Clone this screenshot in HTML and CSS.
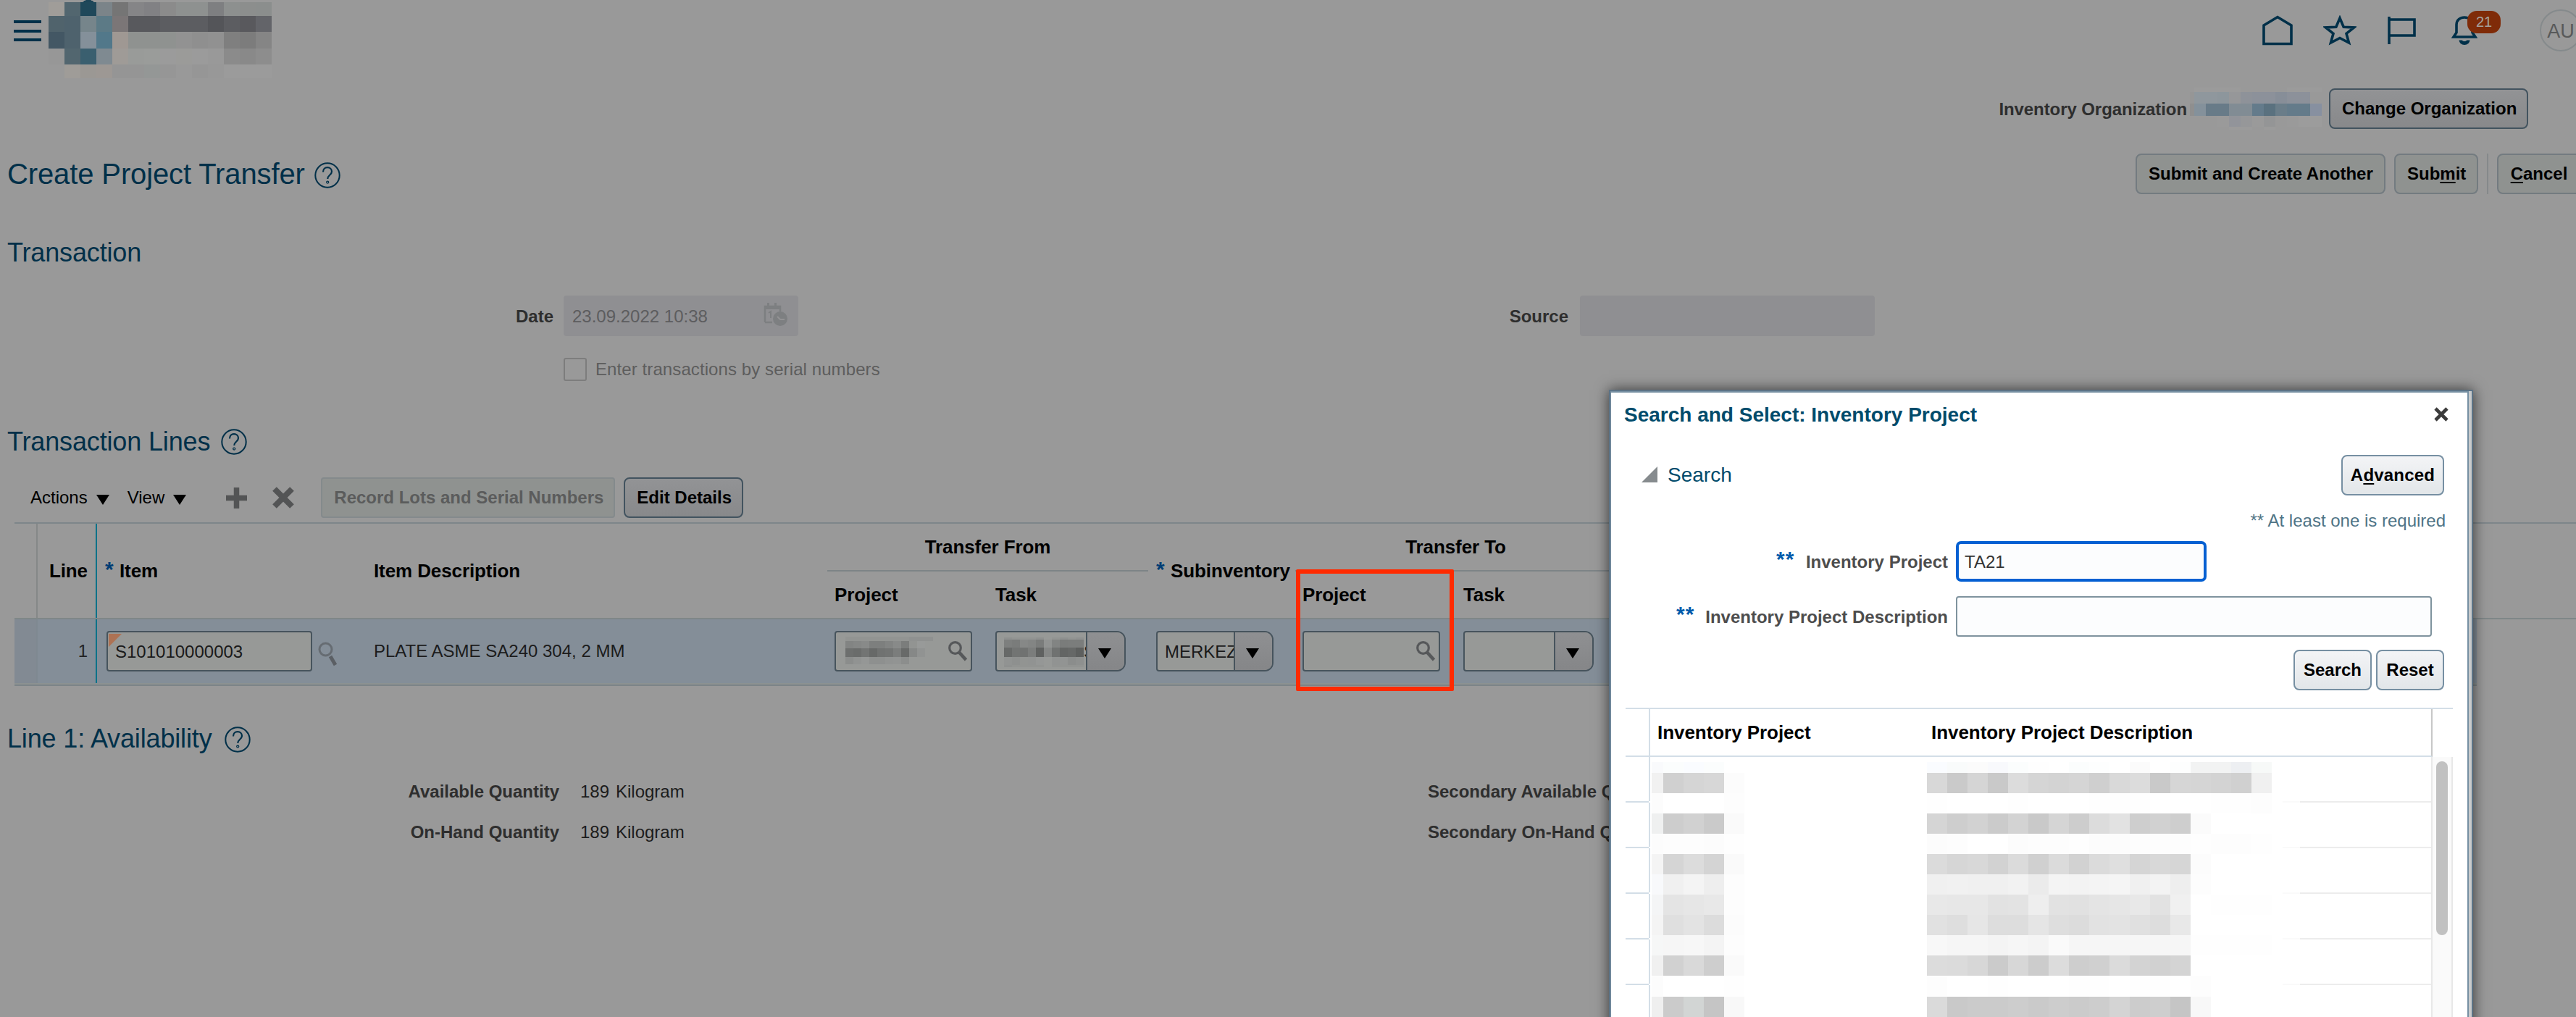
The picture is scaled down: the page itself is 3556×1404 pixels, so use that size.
FILE: index.html
```html
<!DOCTYPE html>
<html lang="en">
<head>
<meta charset="utf-8">
<title>Create Project Transfer</title>
<link rel="stylesheet" href="styles.css">
</head>
<body>
<svg width="0" height="0" class="defs">
  <symbol id="help" viewBox="0 0 36 36"><circle cx="18" cy="18" r="16.7" fill="none" stroke="currentColor" stroke-width="2"/><path d="M12 13.5c0-4 2.600-6.300 6-6.300s6 2.300 6 5.600c0 4.800-5.700 4.700-5.700 10.200" fill="none" stroke="currentColor" stroke-width="2.200"/><circle cx="18.200" cy="27.600" r="1.500" fill="none" stroke="currentColor" stroke-width="1.300"/></symbol>
  <symbol id="lens" viewBox="0 0 28 30"><circle cx="10.500" cy="10.500" r="7.800" fill="none" stroke="currentColor" stroke-width="3.200"/><path d="M16 16.500L25.500 27" stroke="currentColor" stroke-width="4.600"/></symbol>
</svg>
<div class="page">
  <header class="topbar">
    <button class="menu" aria-label="Menu"><i></i><i></i><i></i></button>
    <div class="logo"><div class="mosaic" data-cols="14" data-w="22" data-heights="19,22,23,22,19" data-rows="a09d99,52666f,1f485a,7b8489,757575,858587,818184,8b8b8b,8e9190,8e9190,7e7f81,8d908f,8c8e8d,8b8e8d/50636c,4e626d,76858b,5c7a86,7b7677,58595d,58595d,5c5d61,5c5d61,5c5d61,545559,5c5d61,59595d,636469/435764,4e626d,84909a,52788a,9f9893,8f9290,8f9290,8f9290,929292,8f8f8f,919191,7f7f7f,7c7c7c,858585/979797,52666f,3a5f6f,7f8a91,9f9b97,999b99,9a9c9a,9b9b9b,9b9b99,9b9b9b,999999,8b8b8b,898989,8d8d8d/999999,9f9c98,9b9894,9d9894,959595,959595,949796,969696,999999,969696,989898,9b9b9b,9b9b9b,9b9b9b"></div></div>
    <nav class="tools">
      <svg width="42" height="42" viewBox="0 0 42 42"><path d="M2 39.500V14L21 2.500 40 14v25.500z" fill="none" stroke="#003049" stroke-width="3.600"/></svg>
      <svg width="46" height="42" viewBox="0 0 46 42"><path d="M23 4l5.200 12.300L42.500 17 32 25.300 35.500 38 23 31.500 10.500 38 14 25.300 3.500 17l14.300-.7z" fill="none" stroke="#003049" stroke-width="3.600"/></svg>
      <svg width="40" height="40" viewBox="0 0 40 40"><path d="M2 1v38M2 5h35v22H2" fill="none" stroke="#003049" stroke-width="3.600"/></svg>
      <div class="bell">
        <svg width="36" height="42" viewBox="0 0 36 42"><path d="M3 30h30l-4-6V13C29 6.500 24 3 18 3S7 6.500 7 13v11z" fill="none" stroke="#003049" stroke-width="3.600"/><path d="M10.500 34.500h4q3.500 3 7 0h4q-1 6.500-7.500 6.500t-7.500-6.500z" fill="#003049"/></svg>
        <span class="badge">21</span>
      </div>
      <span class="avatar">AU</span>
    </nav>
  </header>

  <div class="orgrow">
    <span class="label">Inventory Organization</span>
    <div class="mosaic" data-first="6" data-w="16" data-heights="6,16,17,15,4" data-rows="999999,9b9b9b,9b9b9b,9b9b9b,9b9b9b,999999,999999,999999,999999,9b9b9b,9b9b9b,9b9b9b/969696,8f979d,8f979d,8d969c,969799,8e9299,8c919a,8c919a,878e98,8c919a,8c919a,999999/8f8f8f,84919b,687b88,687b88,818c94,818c94,647b8b,5a717f,6a7d89,647b8a,647b8a,8790a0/999999,999999,999999,9a9a9a,92949a,969799,9a9a9a,949596,999999,9a9a9a,9c9c9c,9c9c9c/999999,999999,999999,999999,9b9b9b,9b9b9b,999999,9b9b9b,999999,999999,999999,999999"></div>
    <button class="btn shaded">Change Organization</button>
  </div>

  <div class="titlerow">
    <h1>Create Project Transfer</h1><svg class="help"><use href="#help"/></svg>
    <div class="actions">
      <button class="btn">Submit and Create Another</button>
      <button class="btn">Sub<u>m</u>it</button>
      <span class="divider"></span>
      <button class="btn cancel"><u>C</u>ancel</button>
    </div>
  </div>

  <h2 class="h-transaction">Transaction</h2>
  <div class="form">
    <span class="label date-label">Date</span>
    <div class="field date">23.09.2022 10:38
      <svg width="34" height="34" viewBox="0 0 34 34"><path d="M2 27V5h21v7M2 27h10" fill="none" stroke="#7d7f81" stroke-width="2.500"/><path d="M1 4h22v5H1zM5 0h3v5H5zM15 0h3v5h-3z" fill="#7d7f81"/><path d="M7 14l3-2v9" fill="none" stroke="#7d7f81" stroke-width="2"/><circle cx="23" cy="22" r="10" fill="#7d7f81"/><path d="M19 19l4 4h6" fill="none" stroke="#929294" stroke-width="2"/></svg>
    </div>
    <span class="label source-label">Source</span>
    <div class="field source"></div>
  </div>
  <div class="checkrow"><span class="check"></span>Enter transactions by serial numbers</div>

  <h2 class="h-lines">Transaction Lines<svg class="help"><use href="#help"/></svg></h2>
  <div class="toolbar">
    <span>Actions</span><i class="caret"></i>
    <span class="view">View</span><i class="caret"></i>
    <svg class="plus" width="29" height="29" viewBox="0 0 29 29"><path d="M14.500 0v29M0 14.500h29" stroke="#535455" stroke-width="7.500"/></svg>
    <svg class="cross" width="30" height="30" viewBox="0 0 30 30"><path d="M3 3l24 24M27 3L3 27" stroke="#535455" stroke-width="8"/></svg>
    <button class="btn disabled">Record Lots and Serial Numbers</button>
    <button class="btn shaded">Edit Details</button>
  </div>

  <div class="lines">
    <div class="lhead">
      <div class="c-sel"></div>
      <div class="c-line">Line</div>
      <div class="c-item"><b class="req">*</b>Item</div>
      <div class="c-desc">Item Description</div>
      <div class="group">
        <div class="gtitle">Transfer From</div>
        <div class="gcols"><span>Project</span><span>Task</span></div>
      </div>
      <div class="c-sub"><b class="req">*</b>Subinventory</div>
      <div class="group">
        <div class="gtitle">Transfer To</div>
        <div class="gcols"><span>Project</span><span>Task</span></div>
      </div>
    </div>
    <div class="lrow">
      <div class="c-sel"></div>
      <div class="c-line">1</div>
      <div class="c-item"><span class="box item">S101010000003</span><svg class="lens2" width="27" height="34" viewBox="0 0 27 34"><circle cx="10.500" cy="10.500" r="8.500" fill="none" stroke="#666c72" stroke-width="3"/><path d="M17 20l7 12" stroke="#5b5f64" stroke-width="5"/></svg></div>
      <div class="c-desc">PLATE ASME SA240 304, 2 MM</div>
      <div class="c-prj"><span class="box prj"><span class="mosaic" data-w="11" data-heights="6,10,12,10" data-rows="929492,929492,929492,929492,929492,929492,929492,929492,8f9190,8f9190,8f9190/828483,858786,888a89,7d7f7e,7d7f7e,828483,888a89,7b7d7c,929492,989a99,979997/6d6f6e,6a6c6b,727473,676968,707271,727473,7b7d7c,686a69,868887,919392,979997/8b8d8c,919392,959796,8e908f,8e908f,919392,929493,8c8e8d,979997,979997,979997"></span><svg class="lens"><use href="#lens"/></svg></span></div>
      <div class="c-task"><span class="box combo"><span class="val"><span class="mosaic" data-w="11" data-heights="3,11,13,11,3" data-rows="8e908f,929492,929492,929492,8e908f,979997,929492,8e908f,929492,8f9190/7d7f7e,7a7c7b,868887,838584,7a7c7b,919392,828483,7a7c7b,7b7d7c,7b7d7c/676968,727473,707271,7b7d7c,5f6160,858786,707271,636564,666867,5d5f5e/919392,8e908f,929492,919392,959796,979997,919392,929493,8b8d8c,8e908f/8f9190,929492,929492,929492,929492,979997,929492,929492,929492,929492"></span>S</span><span class="drop"><i class="caret"></i></span></span></div>
      <div class="c-sub"><span class="box combo sub"><span class="val">MERKEZ</span><span class="drop"><i class="caret"></i></span></span></div>
      <div class="c-prj"><span class="box prj"><svg class="lens"><use href="#lens"/></svg></span></div>
      <div class="c-task"><span class="box combo"><span class="val"></span><span class="drop"><i class="caret"></i></span></span></div>
    </div>
  </div>

  <h2 class="h-avail">Line 1: Availability<svg class="help"><use href="#help"/></svg></h2>
  <div class="avail">
    <span class="label">Available Quantity</span><span class="num">189</span><span>Kilogram</span><span class="label second">Secondary Available Quantity</span>
    <span class="label">On-Hand Quantity</span><span class="num">189</span><span>Kilogram</span><span class="label second">Secondary On-Hand Quantity</span>
  </div>
</div>

<div class="highlight"></div>

<section class="dialog">
  <div class="inner">
    <div class="dhead"><h3>Search and Select: Inventory Project</h3>
      <svg width="22" height="22" viewBox="0 0 22 22"><path d="M3 3l16 16M19 3L3 19" stroke="#3b3b3b" stroke-width="4.600"/></svg></div>
    <div class="dsearch"><svg width="22" height="22" viewBox="0 0 22 22"><path d="M22 0v22H0z" fill="#868b8e"/></svg><span>Search</span><button class="btn light">A<u>d</u>vanced</button></div>
    <div class="note">** At least one is required</div>
    <div class="drow"><b class="req">**</b><span class="label">Inventory Project</span><span class="input focus">TA21</span></div>
    <div class="drow second"><b class="req">**</b><span class="label">Inventory Project Description</span><span class="input wide"></span></div>
    <div class="dbuttons"><button class="btn light">Search</button><button class="btn light">Reset</button></div>
    <div class="results">
      <div class="rhead"><span class="r-sel"></span><span class="r-prj">Inventory Project</span><span class="r-desc">Inventory Project Description</span></div>
      <div class="rbody">
        <div class="r-rows"><i></i><i></i><i></i><i></i><i></i><i></i></div>
        <div class="r-data">
          <div class="mosaic" data-first="16" data-w="28" data-heights="15,28,28,28,28,28,28,28,28,28,28,29,28" data-rows="f9fafc,fbfdfd,fafcff,fbfdfd,ffffff/f1f1f1,d0d0d0,d5d5d5,d7d7d7,fcfcfc/fcfcfc,ffffff,ffffff,ffffff,fdfdfd/eff0f0,cdcdcd,d1d1d1,cacaca,fafafa/fcfcfc,fdfdfd,fdfdfd,fcfcfc,fefefe/f4f4f4,d5d5d5,dcdcdc,d4d4d4,fafafa/f8f9fb,f0f0f0,f4f4f4,eeeeee,fdfdfd/f4f5f6,e4e4e4,e6e6e6,e8e8e8,fdfdfd/f4f4f4,dfdfdf,e3e3e3,dcdcdc,fcfcfc/f6f7f7,f6f6f6,f7f7f7,f4f4f4,fdfdfd/f0f0f0,d1d1d1,d9d9d9,cecece,fafafa/fcfcfc,ffffff,ffffff,ffffff,fefefe/efefef,cbcbcb,d2d5d4,c5c5c5,f8f8f8"></div>
          <div class="mosaic desc" data-w="28" data-heights="15,28,28,28,28,28,28,28,28,28,28,29,28" data-rows="fafcff,f9fbfb,fbfbfb,f8f9fc,fbfdfd,fefefe,ffffff,fbfdfd,fdfefe,ffffff,fbfbfb,ffffff,fdfefe,f2f3f3,f2f3f3,edeff2,f7f9f8/d8d8d8,cacaca,d5d5d5,c9c9c9,dcdcdc,d5d5d5,d3d3d3,d5d5d5,cfcfcf,d9d9d9,dcdcdc,c9c9c9,d6d6d6,d5d5d5,d3d3d3,d0d0d0,f0f0f0/fefefe,ffffff,ffffff,ffffff,fefefe,ffffff,ffffff,ffffff,fefefe,fefefe,fefefe,ffffff,ffffff,ffffff,fefefe,fefefe,fdfdfd/d5d5d5,cecece,d2d2d2,cbcbcb,d3d3d3,c9c9c9,d5d5d5,cdcdcd,dcdcdc,e2e2e2,cecece,d1d1d1,cecece,fbfbfb,ffffff,ffffff,ffffff/fcfcfc,fdfdfd,ffffff,ffffff,fcfcfc,fdfdfd,fdfdfd,fefefe,fcfcfc,fcfcfc,fdfdfd,fdfdfd,fdfdfd,fefefe,fdfdfd,fdfdfd,fefefe/dbdbdb,d6d6d6,d8d8d8,d2d2d2,dbdbdb,d0d0d0,dbdbdb,d2d2d2,dbdbdb,dfdfdf,d5d5d5,d8d8d8,d6d6d6,fcfcfc,ffffff,ffffff,ffffff/f0f0f0,f1f1f1,f0f0f0,f0f0f0,f2f2f2,ebebeb,f4f4f4,f3f3f3,f4f4f4,f5f5f5,f0f0f0,f3f3f3,eeeeee,fdfdfd,ffffff,ffffff,ffffff/e8e8e8,e7e7e7,e7e7e7,e2e2e2,e3e3e3,eeeeee,e2e2e2,e1e1e1,e4e4e4,e6e6e6,e8e8e8,e2e2e2,f0f0f0,ffffff,fefefe,fefefe,fefefe/e1e1e1,dedede,e6e6e6,dddddd,dddddd,e5e5e5,dedede,dcdcdc,e2e2e2,e3e3e3,e0e0e0,dddddd,e8e8e8,ffffff,ffffff,ffffff,ffffff/f8f8f8,f6f6f6,f6f6f6,f4f4f4,f6f6f6,f4f4f4,fafafa,f6f6f6,f6f6f6,f6f6f6,f6f6f6,f6f6f6,f6f6f6,fefefe,fefefe,fefefe,fefefe/dcdcdc,dbdbdb,d7d7d7,cbcbcb,d7d7d7,cccccc,dcdcdc,cecece,d0d0d0,dbdbdb,d3d3d3,d1d1d1,d4d4d4,ffffff,ffffff,ffffff,ffffff/fdfdfd,ffffff,ffffff,fefefe,ffffff,ffffff,ffffff,fefefe,fefefe,ffffff,fefefe,fefefe,ffffff,fdfdfd,ffffff,ffffff,ffffff/dadada,c9c9c9,cbcbcb,cbcbcb,cdcdcd,cacaca,cdcdcd,cbcbcb,cdcdcd,d4d4d4,cccccc,cecece,c5c5c5,f8f8f8,ffffff,ffffff,ffffff"></div>
        </div>
        <div class="scroll"><i></i></div>
      </div>
    </div>
  </div>
</section>
<script src="mosaic.js"></script>
</body>
</html>
```
FILE: styles.css
```css
* { box-sizing: border-box; }
body { margin: 0; width: 3556px; height: 1404px; overflow: hidden; position: relative; background: #999; font: 24px/28px "Liberation Sans", Arial, sans-serif; color: #1c1c1c; }
h1, h2, h3 { margin: 0; font-weight: 400; color: #003049; white-space: nowrap; }
h1 { font-size: 40px; line-height: 56px; letter-spacing: -.12px; }
h2 { font-size: 36px; line-height: 40px; height: 40px; display: flex; padding-left: 10px; letter-spacing: -.15px; }
button { font: inherit; font-weight: 700; color: #000; padding: 0; border: 0; background: none; }
u { text-decoration-thickness: 2px; text-underline-offset: 3px; text-decoration-skip-ink: none; }
.defs { position: absolute; }
.page { width: 3556px; height: 1404px; overflow: hidden; white-space: nowrap; }
.label { font-weight: 700; color: #2e2e2e; }
.help { width: 36px; height: 36px; color: #003049; flex: none; }
.mosaic { display: grid; flex: none; }

.topbar { height: 122px; display: flex; align-items: flex-start; }
.menu { margin: 28px 0 0 19px; width: 38px; height: 29px; display: flex; flex-direction: column; justify-content: space-between; }
.menu i { height: 4px; width: 38px; background: #003049; }
.logo { margin: 0 0 0 10px; padding-top: 3px; background: radial-gradient(circle at 55px 11px, #1c4558 11px, transparent 11.500px); }
.tools { margin-left: auto; display: flex; align-items: flex-start; padding-top: 21px; flex: none; }
.tools > svg { margin-right: 42px; flex: none; }
.tools > svg:nth-child(3) { margin: 1px 48px 0 1px; }
.bell { position: relative; width: 36px; height: 42px; margin-right: 86px; }
.badge { position: absolute; left: 22px; top: -6px; width: 46px; height: 31px; border-radius: 13px; background: #7f2b08; color: #a6a29f; font-size: 20px; line-height: 31px; text-align: center; }
.avatar { width: 58px; height: 58px; margin: -8px -8px 0 0; border: 2px solid #858a8c; border-radius: 50%; text-align: center; line-height: 57px; font-size: 27px; color: #58595a; flex: none; }

.btn { height: 56px; border: 2px solid #737b80; border-radius: 8px; background: #8f9290; padding: 0 16px; line-height: 52px; white-space: nowrap; flex: none; }
.btn.shaded { border-color: #42535f; background: linear-gradient(#929395, #88898b); }
.btn.disabled { border-color: #848a8c; border-radius: 4px; color: #5b5c5c; }
.btn.light { border-color: #768fa2; background: linear-gradient(#f3f4f6, #e2e6e9); }
.orgrow { height: 56px; display: flex; justify-content: flex-end; padding-right: 66px; align-items: center; }
.orgrow .label { padding-top: 2px; letter-spacing: -.08px; }
.orgrow .mosaic { margin: 0 10px 0 4px; }
.orgrow .btn { width: 275px; }
.titlerow { margin-top: 34px; height: 56px; display: flex; padding-left: 10px; }
.titlerow .help { margin: 12px 0 0 13px; }
.actions { margin-left: auto; display: flex; gap: 12px; margin-right: -7px; }
.actions .btn:first-child { width: 345px; }
.actions .btn:nth-child(2) { width: 116px; }
.divider { width: 2px; background: #85898b; }
.cancel { width: 116px; }

.h-transaction { margin-top: 61px; }
.form { margin-top: 39px; height: 56px; display: flex; line-height: 57px; }
.date-label { width: 764px; text-align: right; }
.field { background: #8f8f92; border-radius: 4px; color: #5d5d5f; }
.date { margin-left: 14px; width: 324px; padding: 0 14px 0 12px; display: flex; justify-content: space-between; }
.date svg { margin-top: 10px; }
.source-label { width: 1063px; text-align: right; }
.source { margin-left: 16px; width: 407px; }
.checkrow { margin-top: 30px; height: 32px; padding-left: 778px; display: flex; line-height: 31px; color: #5d5d5d; letter-spacing: .09px; }
.check { width: 32px; height: 32px; border: 2px solid #7d7d7d; border-radius: 3px; margin-right: 12px; }
.h-lines { margin-top: 64px; }
.h-lines .help { margin: 2px 0 0 15px; }

.toolbar { margin-top: 29px; height: 56px; padding-left: 42px; display: flex; align-items: center; color: #000; }
.caret { width: 0; height: 0; border: 9px solid transparent; border-top: 14px solid #000; border-bottom: 0; margin-left: 12px; }
.toolbar .caret { margin-top: 5px; }
.view { margin-left: 25px; }
.plus { margin-left: 55px; }
.cross { margin-left: 35px; }
.toolbar .disabled { margin-left: 37px; width: 406px; }
.toolbar .shaded { margin-left: 12px; width: 165px; }

.lines { margin: 6px 0 0 20px; border-top: 2px solid #7e868a; }
.lhead { display: flex; height: 132px; border-bottom: 2px solid #7f8788; font-size: 26px; letter-spacing: -.1px; font-weight: 700; color: #000; line-height: 130px; }
.c-sel { width: 32px; border-right: 2px solid #858888; flex: none; }
.c-line { width: 82px; border-right: 2px solid #007289; text-align: right; padding-right: 11px; flex: none; }
.c-item { width: 371px; padding-left: 11px; display: flex; flex: none; }
.req { color: #003d74; width: 20px; font-size: 30px; font-weight: 700; margin-top: -2px; }
.c-desc { width: 637px; padding-left: 11px; flex: none; }
.group { width: 443px; flex: none; line-height: 64px; }
.gtitle { text-align: center; height: 66px; border-bottom: 2px solid #7d8487; }
.gcols { display: flex; padding-left: 10px; }
.gcols span { width: 222px; flex: none; }
.c-sub { width: 203px; padding-left: 11px; display: flex; flex: none; }
.lrow { display: flex; width: 3399px; height: 92px; background: #848e98; border-bottom: 2px solid #7c8488; box-shadow: inset 0 -2px #8c9291; line-height: 88px; }
.lrow > div { height: 88px; }
.lrow .c-sel { background: #828a93; border-color: #7f8991; }
.lrow .c-line { color: #222; }
.lrow .c-item { padding-left: 13px; }
.box { height: 56px; margin-top: 16px; border: 2px solid #47545d; border-radius: 4px; background: #979997; line-height: 54px; display: flex; flex: none; color: #1a1a1a; }
.item { width: 284px; padding-left: 10px; background: linear-gradient(135deg, #ad7254 12.500px, transparent 13px) 1px 2px / 60px 50px no-repeat #979997; }
.lens2 { margin: 31px 0 0 8px; }
.c-prj { width: 222px; padding-left: 10px; flex: none; }
.c-task { width: 221px; padding-left: 10px; flex: none; }
.prj { width: 190px; padding: 0 4px 0 13px; }
.prj .mosaic { margin-top: 6px; }
.lens { width: 28px; height: 30px; color: #56585a; margin: 11px 0 0 auto; }
.combo { width: 180px; border-radius: 4px 12px 12px 4px; overflow: hidden; }
.val { flex: 1; overflow: hidden; padding-left: 10px; display: flex; min-width: 0; }
.val .mosaic { margin-top: 7px; }
.drop { width: 53px; border-left: 2px solid #47545d; background: linear-gradient(#8f9092, #858688); flex: none; }
.drop .caret { display: block; margin: 22px 0 0 15px; }
.sub { width: 162px; }
.lrow .c-sub { width: 203px; }

.h-avail { margin-top: 53px; }
.h-avail .help { margin: 3px 0 0 17px; }
.avail { margin-top: 39px; display: grid; grid-template-columns: 772px 78px 1121px 400px; row-gap: 28px; }
.avail .label { text-align: right; }
.avail .num { padding-left: 29px; }
.avail .second { text-align: left; }

.highlight { position: absolute; left: 1789px; top: 786px; width: 218px; height: 168px; border: 6px solid #ff2a00; border-radius: 2px; }

.dialog { position: absolute; left: 2221px; top: 538px; width: 1193px; height: 900px; border: 2px solid #5c7386; background: #c8cacb; padding-right: 4px; box-shadow: 0 0 18px rgba(0,0,0,.65); white-space: nowrap; }
.inner { height: 900px; background: #fff; border: 2px solid #768fa2; border-left-width: 1px; padding-left: 20px; }
.inner h3 { font-size: 28px; line-height: 34px; font-weight: 700; color: #004b6b; }
.dhead { display: flex; justify-content: space-between; height: 46px; padding: 14px 25px 0 0; }
.dhead > h3 { margin-left: -2px; }
.dhead svg { margin-top: 5px; }
.dsearch { margin-top: 40px; height: 56px; display: flex; padding: 0 32px 0 22px; font-size: 28px; line-height: 56px; color: #004b6b; }
.dsearch svg { margin: 16px 14px 0 0; }
.dsearch .btn { margin-left: auto; font-size: 24px; width: 142px; padding: 0; letter-spacing: .2px; }
.note { text-align: right; padding-right: 30px; margin-top: 21px; line-height: 28px; color: #4f7486; }
.drow { display: flex; margin-top: 14px; height: 56px; line-height: 56px; width: 1113px; padding-left: 208px; }
.drow.second { margin-top: 20px; padding-left: 70px; }
.drow .req { color: #005bab; width: 41px; font-size: 30px; letter-spacing: 1px; margin-top: -3px; }
.drow .label { color: #4d4d4d; padding-top: 1px; flex: none; margin-right: 11px; }
.input { border: 2px solid #7f939e; border-radius: 4px; background: #fcfdfe; line-height: 52px; padding-left: 10px; color: #333; flex: none; margin-left: auto; }
.focus { border: 4px solid #0560d2; border-radius: 7px; width: 346px; line-height: 50px; padding-left: 8px; margin-right: 311px; }
.wide { width: 657px; }
.dbuttons { margin-top: 18px; display: flex; gap: 6px; justify-content: flex-end; padding-right: 32px; }
.dbuttons .btn { width: 94px; padding: 0; }
.dbuttons .btn:first-child { width: 108px; }
.results { margin-top: 24px; width: 1142px; border-top: 2px solid #d3dee7; }
.rhead { display: flex; width: 1114px; height: 66px; border-bottom: 2px solid #d3dee7; border-right: 2px solid #c8c8c8; font-size: 26px; letter-spacing: -.05px; font-weight: 700; color: #000; line-height: 64px; }
.r-sel { width: 34px; border-right: 2px solid #d3dee7; }
.r-prj { width: 377px; padding-left: 10px; }
.r-desc { padding-left: 11px; }
.rbody { display: flex; height: 400px; width: 1142px; position: relative; }
.r-rows { width: 1112px; background: linear-gradient(#d3dee7, #d3dee7) 32px 0 / 2px 100% no-repeat; }
.r-rows i { display: block; height: 63px; border-bottom: 2px solid #ececec; border-image: linear-gradient(90deg, #d3dee7 34px, #fff 34px, #fff 906px, #fafafa 906px, #fafafa 930px, #ececec 930px) 2; border-style: solid; border-width: 0 0 2px; }
.r-data { position: absolute; left: 36px; top: 7px; display: flex; }
.desc { margin-left: 252px; }
.scroll { width: 30px; background: #fafafa; border: 2px solid #e8e8e8; border-width: 0 2px 0 2px; padding: 6px 5px; }
.scroll i { display: block; width: 16px; height: 240px; border-radius: 8px; background: #c1c1c1; }
```
FILE: mosaic.js
```js
// Fills each .mosaic with the colour cells listed in its data-rows attribute.
document.querySelectorAll('.mosaic').forEach(function (el) {
  var rows = el.dataset.rows.split('/').map(function (r) { return r.split(','); });
  var w = el.dataset.w + 'px';
  var first = el.dataset.first ? el.dataset.first + 'px' : w;
  el.style.gridTemplateColumns = first + ' repeat(' + (rows[0].length - 1) + ', ' + w + ')';
  el.style.gridTemplateRows = el.dataset.heights.split(',').join('px ') + 'px';
  rows.forEach(function (row) {
    row.forEach(function (color) {
      var cell = document.createElement('span');
      cell.style.background = '#' + color;
      el.appendChild(cell);
    });
  });
});
```
